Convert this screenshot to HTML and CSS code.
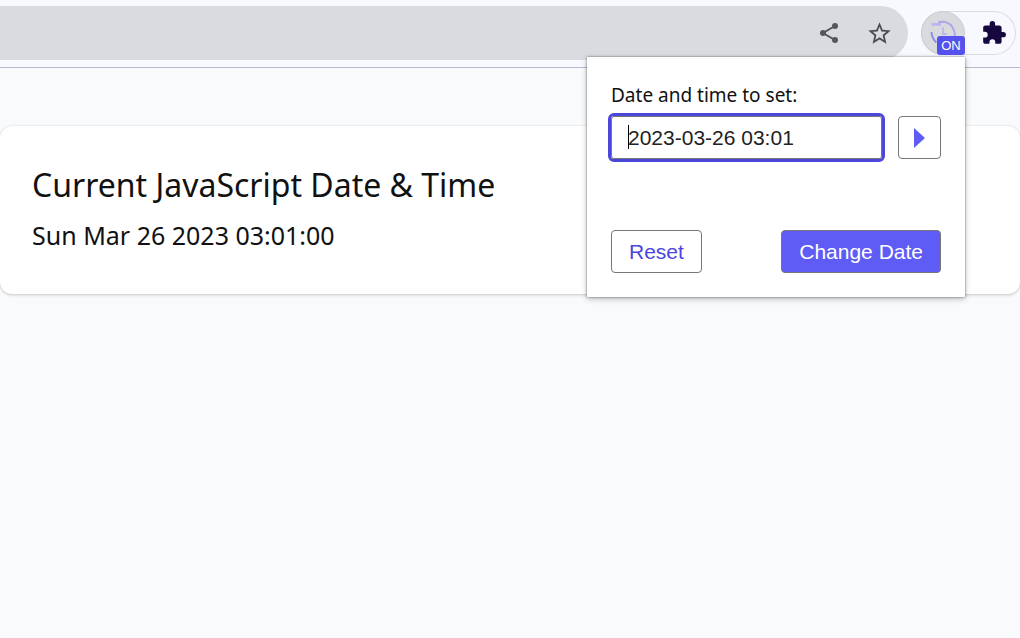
FILE: index.html
```
<!DOCTYPE html>
<html lang="en">
<head>
    <meta charset="UTF-8">
    <meta name="viewport" content="width=device-width, initial-scale=1.0">
    <title>Current JavaScript Date &amp; Time</title>
    <link rel="stylesheet" href="styles.css">
</head>
<body>
    <header class="toolbar">
        <div class="address-bar">
            <button class="icon-button" type="button" aria-label="Share">
                <svg width="24" height="24" viewBox="0 0 24 24">
                    <path d="M18 5 6 12l12 7" fill="none" stroke="#55565a" stroke-width="2"/>
                    <circle cx="18" cy="5" r="3" fill="#55565a"/>
                    <circle cx="6" cy="12" r="3" fill="#55565a"/>
                    <circle cx="18" cy="19" r="3" fill="#55565a"/>
                </svg>
            </button>
            <button class="icon-button" type="button" aria-label="Bookmark">
                <svg width="27" height="27" viewBox="0 0 24 24">
                    <path fill="#4c4d52" d="M22 9.24l-7.19-.62L12 2 9.19 8.63 2 9.24l5.46 4.73L5.82 21 12 17.27 18.18 21l-1.63-7.03L22 9.24zM12 15.4l-3.76 2.27 1-4.28-3.32-2.88 4.38-.38L12 6.1l1.71 4.04 4.38.38-3.32 2.88 1 4.28L12 15.4z"/>
                </svg>
            </button>
        </div>

        <div class="extensions">
            <div class="extension">
                <button class="extension-button" type="button" aria-label="Change date extension">
                    <svg width="42" height="42" viewBox="0 0 44 44" fill="none">
                        <path d="M17 11c6-2 12 0 15 5 2 4 3 8 2 10" stroke="#a9a7ea" stroke-width="2"/>
                        <path d="M10 13h10" stroke="#b9b6f2" stroke-width="3"/>
                        <path d="M10 21c0 4 2 8 5 11" stroke="#8e89ee" stroke-width="2"/>
                        <path d="M22 16v7h4" stroke="#bbb9ea" stroke-width="2"/>
                    </svg>
                </button>
                <span class="badge">ON</span>

                <form class="popup">
                    <label for="date">Date and time to set:</label>
                    <div class="date-row">
                        <div class="date-field">
                            <input type="text" id="date" name="date" value="2023-03-26 03:01">
                            <span class="caret"></span>
                        </div>
                        <button class="play" type="button" aria-label="Start clock">
                            <svg width="12" height="20" viewBox="0 0 12 20">
                                <path d="M0 0l11 10L0 20z" fill="#5f5bf5"/>
                            </svg>
                        </button>
                    </div>
                    <div class="actions">
                        <button type="reset">Reset</button>
                        <button class="primary" type="button">Change Date</button>
                    </div>
                </form>
            </div>
            <button class="icon-button puzzle" type="button" aria-label="Extensions">
                <svg width="26" height="26" viewBox="0 0 24 24">
                    <path fill="#17073f" d="M20.500 11H19V7c0-1.100-.9-2-2-2h-4V3.500a2.500 2.500 0 0 0-5 0V5H4c-1.100 0-1.990.9-1.990 2v3.800H3.500a2.700 2.700 0 0 1 0 5.400H2V20c0 1.100.9 2 2 2h3.800v-1.500a2.700 2.700 0 0 1 5.400 0V22H17c1.100 0 2-.9 2-2v-4h1.500a2.500 2.500 0 0 0 0-5z"/>
                </svg>
            </button>
        </div>
    </header>

    <main>
        <section class="card">
            <h1>Current JavaScript Date &amp; Time</h1>
            <p>Sun Mar 26 2023 03:01:00</p>
        </section>
    </main>
</body>
</html>
```
FILE: styles.css
```
* {
    box-sizing: border-box;
}

body {
    min-height: 100vh;
    font-family: "Noto Sans", sans-serif;
    background-color: #f8fafc;
    color: #111;
    margin: 0;
}

button {
    font-family: "Liberation Sans", Arial, sans-serif;
    cursor: pointer;
}

/* Browser toolbar */
.toolbar {
    display: flex;
    align-items: center;
    gap: 13px;
    padding: 6px 4px 7px 0;
    background-color: #f7f9fe;
    border-bottom: 1px solid #b8b9cf;
}

.address-bar {
    flex: 1;
    display: flex;
    align-items: center;
    justify-content: flex-end;
    gap: 25px;
    height: 54px;
    padding-right: 15px;
    background-color: #dadbdf;
    border-radius: 0 27px 27px 0;
}

.icon-button {
    display: flex;
    padding: 0;
    border: none;
    background: none;
}

.extensions {
    display: flex;
    align-items: center;
    width: 95px;
    height: 44px;
    border-radius: 22px;
    box-shadow: inset 0 0 0 1px #dcdde3;
}

.extension {
    position: relative;
}

.extension-button {
    display: block;
    width: 44px;
    height: 44px;
    padding: 0;
    border: 1px solid #cbccd1;
    border-radius: 50%;
    background-color: #d9dade;
}

.puzzle {
    margin-left: 16px;
}

.badge {
    position: absolute;
    right: 0;
    bottom: 0;
    z-index: 2;
    width: 28px;
    border-radius: 3px;
    background-color: #5551ee;
    color: #fff;
    font-family: "Liberation Sans", Arial, sans-serif;
    font-size: 13px;
    line-height: 19px;
    text-align: center;
}

/* Extension popup */
.popup {
    position: absolute;
    top: 100%;
    right: 0;
    width: 378px;
    margin-top: 2px;
    padding: 24px;
    background-color: #fff;
    box-shadow: 0 0 2px rgba(0, 0, 0, 0.5), 0 2px 6px rgba(0, 0, 0, 0.25);
}

.popup label {
    display: block;
    margin-bottom: 7px;
    font-size: 19px;
    line-height: 28px;
}

.date-row {
    display: flex;
    gap: 16px;
}

.date-field {
    position: relative;
    flex: 1;
}

.date-field input {
    display: block;
    width: 100%;
    height: 43px;
    padding: 0 16px;
    border: 1px solid #777;
    border-radius: 3px;
    outline: 3px solid #4b47dd;
    color: #222;
    font-family: "Liberation Sans", Arial, sans-serif;
    font-size: 21px;
}

.caret {
    position: absolute;
    top: 9px;
    left: 17px;
    width: 1px;
    height: 24px;
    background-color: #000;
}

.popup button {
    height: 43px;
    padding: 0 17px;
    border: 1px solid #777;
    border-radius: 4px;
    background-color: #fff;
    color: #4a45e0;
    font-size: 21px;
}

.popup .play {
    display: flex;
    align-items: center;
    justify-content: center;
    width: 43px;
    padding: 0;
}

.popup .primary {
    background-color: #5f5bf5;
    color: #fff;
}

.actions {
    display: flex;
    justify-content: space-between;
    margin-top: 71px;
}

/* Page content */
main {
    padding-top: 58px;
}

.card {
    padding: 32px;
    background-color: #fff;
    border-radius: 12px;
    box-shadow: 0 0 2px rgba(0, 0, 0, 0.2), 0 2px 3px rgba(0, 0, 0, 0.1);
}

h1 {
    margin: 0;
    font-size: 32px;
    font-weight: 400;
    line-height: 54px;
}

p {
    margin: 0 0 4px;
    font-size: 25px;
    line-height: 46px;
}
```
